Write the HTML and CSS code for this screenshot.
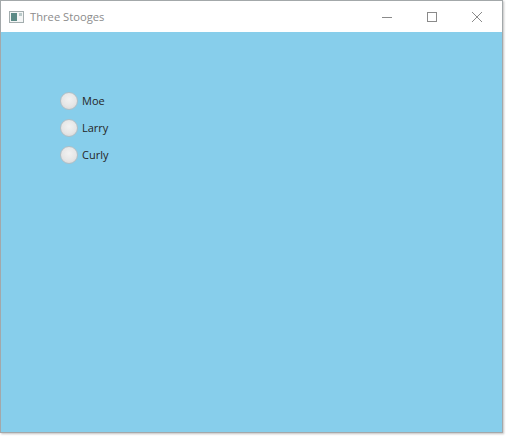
FILE: index.html
```html
<!DOCTYPE html>
<html lang="en">
  <head>
    <meta charset="UTF-8" />
    <meta name="viewport" content="width=device-width, initial-scale=1.0" />
    <title>Three Stooges</title>
    <link rel="stylesheet" href="styles.css">
  </head>
  <body>
    <div class="window">
      <div class="title-bar">
        <svg class="app-icon" width="16" height="14" viewBox="0 0 16 14">
          <rect x="0.5" y="1.5" width="14" height="11" fill="#f4f6f6" stroke="#a3adae" />
          <rect x="2" y="3" width="6" height="8" fill="#5b8a86" />
          <rect x="10" y="3" width="3" height="3" fill="#b9c9c9" />
        </svg>
        <span class="title">Three Stooges</span>
        <div class="window-controls">
          <svg class="control" width="12" height="12" viewBox="0 0 12 12">
            <path d="M1 6.5H11" stroke="#8a8a8a" fill="none" />
          </svg>
          <svg class="control" width="12" height="12" viewBox="0 0 12 12">
            <rect x="1.5" y="1.5" width="9" height="9" stroke="#8a8a8a" fill="none" />
          </svg>
          <svg class="control" width="12" height="12" viewBox="0 0 12 12">
            <path d="M1 1L11 11M11 1L1 11" stroke="#8a8a8a" fill="none" />
          </svg>
        </div>
      </div>

      <div class="content">
        <label class="radio-row"><span class="radio"></span><span class="radio-text">Moe</span></label>
        <label class="radio-row"><span class="radio"></span><span class="radio-text">Larry</span></label>
        <label class="radio-row"><span class="radio"></span><span class="radio-text">Curly</span></label>
      </div>
    </div>
  </body>
</html>
```

FILE: styles.css
```css
html, body {
  height: 100%;
}

body {
  margin: 0;
  background-color: #ffffff;
  font-family: "Open Sans", "Noto Sans", sans-serif;
  overflow: hidden;
}

.window {
  width: 503px;
  height: 433px;
  box-sizing: border-box;
  border: 1px solid #a3a8aa;
  box-shadow: 1px 1px 2px rgba(0, 0, 0, 0.25);
  display: flex;
  flex-direction: column;
}

.title-bar {
  height: 31px;
  display: flex;
  align-items: center;
  background-color: #ffffff;
  padding-left: 8px;
}

.app-icon {
  margin-right: 5px;
}

.title {
  font-size: 11.2px;
  color: #8c8c8c;
}

.window-controls {
  margin-left: auto;
  display: flex;
  gap: 33px;
  padding-right: 19px;
}

.content {
  flex: 1;
  background-color: #87ceeb;
  padding: 59px 0 0 59px;
  display: flex;
  flex-direction: column;
  gap: 7px;
}

.radio-row {
  height: 20px;
  display: flex;
  align-items: center;
  gap: 4px;
  font-size: 11px;
  color: #262626;
}

.radio-text {
  padding-bottom: 2px;
}

.radio {
  width: 16px;
  height: 16px;
  border-radius: 50%;
  border: 1px solid #b0bfc6;
  background: radial-gradient(circle at 50% 40%, #f2f2f2 0%, #e6e6e6 55%, #d6d2d2 100%);
}
```
